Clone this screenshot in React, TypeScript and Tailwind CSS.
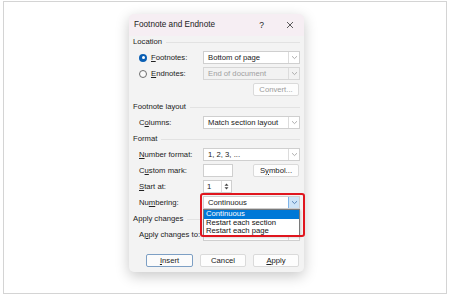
import React from "react"

const font = { fontFamily: '"Liberation Sans", Arial, sans-serif' }

const U = ({ children }: { children: React.ReactNode }) => <span className="underline underline-offset-[1px]">{children}</span>

const Chevron = ({ color = "#8a8a8a" }: { color?: string }) => (
  <svg width="7" height="5" viewBox="0 0 7 5">
    <path d="M1 1.2 L3.5 3.6 L6 1.2" fill="none" stroke={color} strokeWidth="0.8" />
  </svg>
)

const Select = ({ value, disabled = false, hover = false }: { value: string; disabled?: boolean; hover?: boolean }) => (
  <div
    className={`flex h-[13px] w-[97px] items-stretch border ${
      disabled ? "border-[#d6d6d6] bg-[#f2f2f2] text-[#a0a0a0]" : "border-[#cfcfcf] bg-white text-[#222]"
    } ${hover ? "border-[#7eb4ea]" : ""}`}
  >
    <div className="flex flex-1 items-center pl-[4px]">{value}</div>
    <div
      className={`flex w-[11px] items-center justify-center border-l ${
        hover ? "border-[#7eb4ea] bg-[#cde4f7]" : "border-[#dcdcdc]"
      }`}
    >
      <Chevron color={hover ? "#3c6fa8" : "#9a9a9a"} />
    </div>
  </div>
)

const Btn = ({ children, disabled = false, primary = false, w = "w-[46px]" }: { children: React.ReactNode; disabled?: boolean; primary?: boolean; w?: string }) => (
  <div
    className={`flex h-[13px] ${w} items-center justify-center rounded-[2px] border ${
      primary ? "border-[#7d9fc4] bg-[#fbfbfb]" : "border-[#dadada] bg-[#fdfdfd]"
    } ${disabled ? "text-[#9c9c9c]" : "text-[#222]"}`}
  >
    {children}
  </div>
)

const Group = ({ title, mt }: { title: string; mt: string }) => (
  <div className={`flex h-[12px] items-center gap-[4px] ${mt}`}>
    <span className="text-[#222]">{title}</span>
    <div className="h-px flex-1 bg-[#e2e2e2]" />
  </div>
)

export default function App() {
  return (
    <div className="h-[295px] w-[450px] bg-white px-[3px] py-[1px]" style={font}>
      <div className="h-full border border-[#d4d4d4] pl-[125px] pt-[12px]">
        <div className="relative w-[175px] rounded-[5px] bg-[#f3f3f3] text-[7.7px] leading-none shadow-[0_4px_14px_rgba(0,0,0,0.22)]">
          {/* title bar */}
          <div className="flex h-[22px] items-center rounded-t-[5px] bg-[#f6eef3] pl-[5px] pr-[10px] text-[8.2px] text-[#222]">
            <span className="flex-1">Footnote and Endnote</span>
            <span className="mr-[22px] text-[8.5px]">?</span>
            <svg width="8" height="8" viewBox="0 0 8 8">
              <path d="M1 1 L7 7 M7 1 L1 7" stroke="#333" strokeWidth="0.8" />
            </svg>
          </div>

          <div className="px-[4px] pb-[5px]">
            <Group title="Location" mt="mt-0" />
            <div className="mt-[3px] flex h-[13px] items-center">
              <div className="flex w-[70px] items-center pl-[6px]">
                <div className="mr-[4px] flex h-[8px] w-[8px] items-center justify-center rounded-full bg-[#0a5fb4]">
                  <div className="h-[3px] w-[3px] rounded-full bg-white" />
                </div>
                <span className="text-[#222]">
                  <U>F</U>ootnotes:
                </span>
              </div>
              <Select value="Bottom of page" />
            </div>
            <div className="mt-[3px] flex h-[13px] items-center">
              <div className="flex w-[70px] items-center pl-[6px]">
                <div className="mr-[4px] h-[8px] w-[8px] rounded-full border border-[#6d6d6d] bg-[#fafafa]" />
                <span className="text-[#222]">
                  <U>E</U>ndnotes:
                </span>
              </div>
              <Select value="End of document" disabled />
            </div>
            <div className="mt-[3px] flex h-[13px] justify-end pr-[1px]">
              <Btn disabled>Convert...</Btn>
            </div>

            <Group title="Footnote layout" mt="mt-[5px]" />
            <div className="mt-[3px] flex h-[13px] items-center">
              <div className="w-[70px] pl-[6px] text-[#222]">
                C<U>o</U>lumns:
              </div>
              <Select value="Match section layout" />
            </div>

            <Group title="Format" mt="mt-[4px]" />
            <div className="mt-[3px] flex h-[13px] items-center">
              <div className="w-[70px] pl-[6px] text-[#222]">
                <U>N</U>umber format:
              </div>
              <Select value="1, 2, 3, ..." />
            </div>
            <div className="mt-[3px] flex h-[13px] items-center">
              <div className="w-[70px] pl-[6px] text-[#222]">
                C<U>u</U>stom mark:
              </div>
              <div className="h-[13px] w-[30px] border border-[#cfcfcf] bg-white" />
              <div className="flex-1" />
              <div className="pr-[1px]">
                <Btn>
                  S<U>y</U>mbol...
                </Btn>
              </div>
            </div>
            <div className="mt-[3px] flex h-[13px] items-center">
              <div className="w-[70px] pl-[6px] text-[#222]">
                <U>S</U>tart at:
              </div>
              <div className="flex h-[13px] w-[29px] border border-[#cfcfcf] bg-white">
                <div className="flex flex-1 items-center pl-[3px] text-[#222]">1</div>
                <div className="flex w-[10px] flex-col items-center justify-center gap-[1px] border-l border-[#dcdcdc]">
                  <svg width="5" height="3" viewBox="0 0 5 3">
                    <path d="M0.5 2.8 L2.5 0.4 L4.5 2.8 Z" fill="#444" />
                  </svg>
                  <svg width="5" height="3" viewBox="0 0 5 3">
                    <path d="M0.5 0.2 L2.5 2.6 L4.5 0.2 Z" fill="#444" />
                  </svg>
                </div>
              </div>
            </div>
            <div className="mt-[3px] flex h-[13px] items-center">
              <div className="w-[70px] pl-[6px] text-[#222]">
                Nu<U>m</U>bering:
              </div>
              <Select value="Continuous" hover />
            </div>

            <Group title="Apply changes" mt="mt-[4px]" />
            <div className="mt-[3px] flex h-[13px] items-center">
              <div className="w-[70px] pl-[6px] text-[#222]">
                A<U>p</U>ply changes to:
              </div>
              <Select value="" />
            </div>

            <div className="mt-[13px] flex h-[13px] items-center justify-end gap-[7px] pr-[1px]">
              <Btn primary w="w-[47px]">
                <U>I</U>nsert
              </Btn>
              <Btn>Cancel</Btn>
              <Btn>
                <U>A</U>pply
              </Btn>
            </div>
          </div>

          {/* open dropdown list */}
          <div className="absolute left-[74px] top-[195px] w-[97px] border border-[#7a7a7a] bg-white pb-[1px] text-[#111] shadow-[1px_1px_2px_rgba(0,0,0,0.15)]">
            <div className="flex h-[8.5px] items-center bg-[#0078d7] pl-[2px] text-white">Continuous</div>
            <div className="flex h-[8px] items-center pl-[2px]">Restart each section</div>
            <div className="flex h-[8px] items-center pl-[2px]">Restart each page</div>
          </div>

          {/* red highlight */}
          <div className="pointer-events-none absolute left-[71px] top-[179px] h-[44px] w-[105px] rounded-[3px] border-2 border-[#e0161e]" />
        </div>
      </div>
    </div>
  )
}
